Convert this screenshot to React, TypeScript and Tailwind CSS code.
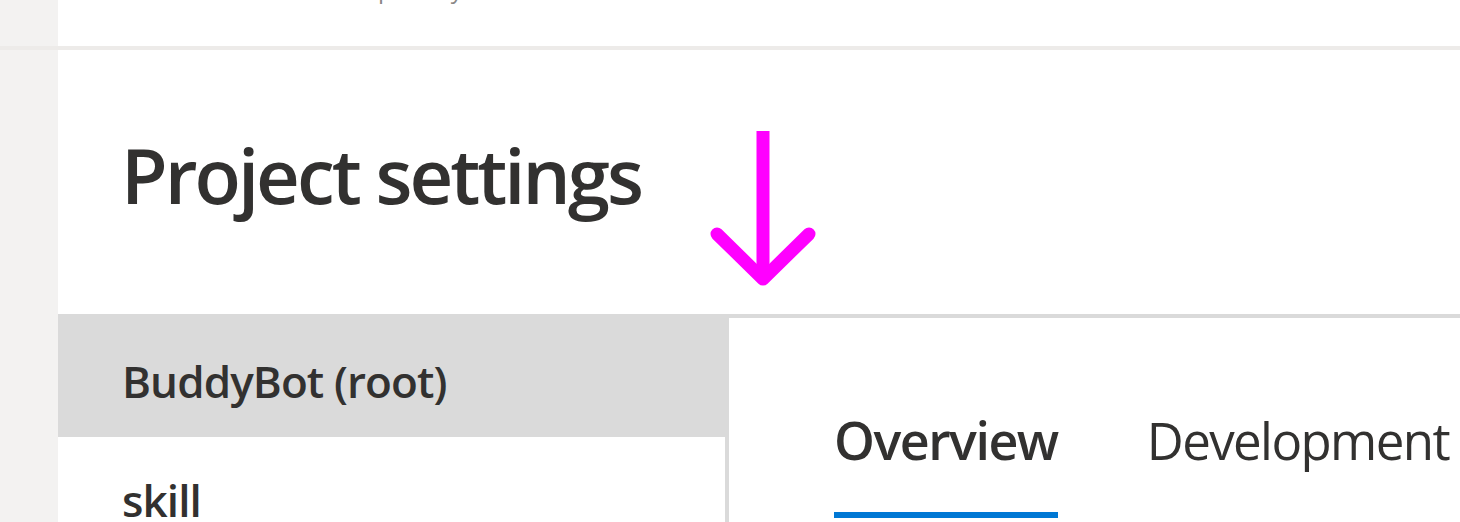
import React from "react";

export default function App() {
  return (
    <div
      className="relative w-[1460px] h-[522px] overflow-hidden bg-white text-[#323130]"
      style={{ fontFamily: '"Open Sans", "Noto Sans", sans-serif' }}
    >
      {/* Top header (clipped) */}
      <div className="flex h-[46px]">
        <div className="w-[58px] shrink-0 bg-[#f3f2f1]" />
        <div className="flex-1 overflow-hidden relative">
          <div className="flex text-[24px] leading-[24px] text-[#8a8886] -mt-[23px]">
            <span className="ml-[320px]">p</span>
            <span className="ml-[58px]">y</span>
          </div>
        </div>
      </div>
      <div className="h-[4px] bg-[#edebe9]" />

      {/* Body */}
      <div className="flex h-[472px]">
        <div className="w-[58px] shrink-0 bg-[#f3f2f1]" />
        <div className="flex-1 flex flex-col min-w-0">
          {/* Title */}
          <div className="pt-[87px] pb-[101px] pl-[63px]">
            <h1 className="text-[76px] leading-[76px] font-semibold tracking-[-3px] whitespace-nowrap">
              Project settings
            </h1>
          </div>
          <div className="h-[4px] bg-[#dadada]" />

          <div className="flex flex-1 min-h-0">
            {/* Nav */}
            <nav className="w-[671px] shrink-0 border-r-4 border-[#dadada] flex flex-col">
              <div className="h-[119px] shrink-0 bg-[#dadada] pl-[64px] pt-[4px] text-[44px] leading-[119px] font-semibold tracking-[-0.9px] whitespace-nowrap">
                BuddyBot (root)
              </div>
              <div className="h-[119px] shrink-0 pl-[64px] pt-[4px] text-[44px] leading-[119px] font-semibold tracking-[-0.9px] whitespace-nowrap">
                skill
              </div>
            </nav>

            {/* Content */}
            <div className="flex-1 pl-[105px] pt-[96px] min-w-0">
              <div className="flex gap-[89px] whitespace-nowrap">
                <div className="text-[52px] leading-[52px] font-semibold tracking-[-1.5px] pb-[46px] border-b-[6px] border-[#0078d4]">
                  Overview
                </div>
                <div className="text-[51px] leading-[52px] font-normal tracking-[-1.6px]">
                  Development
                </div>
              </div>
            </div>
          </div>
        </div>
      </div>

      {/* Annotation arrow */}
      <svg
        className="absolute left-[700px] top-[120px]"
        width="130"
        height="180"
        viewBox="0 0 130 180"
        fill="none"
      >
        <line x1="63" y1="11" x2="63" y2="156" stroke="#ff00ff" strokeWidth="13" />
        <polyline
          points="17,114 63,159 109,114"
          stroke="#ff00ff"
          strokeWidth="13"
          strokeLinecap="round"
          strokeLinejoin="round"
        />
      </svg>
    </div>
  );
}
